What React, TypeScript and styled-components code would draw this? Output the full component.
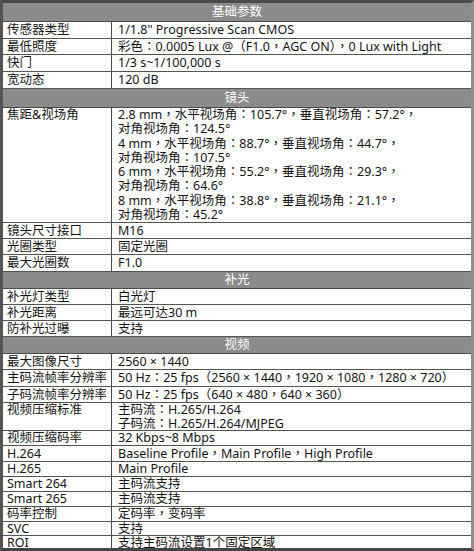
import React from "react";
import styled, { createGlobalStyle } from "styled-components";

const GlobalStyle = createGlobalStyle`
  html, body {
    margin: 0;
    padding: 0;
    background: #ffffff;
  }
  body {
    font-family: "Noto Sans", "Noto Sans CJK SC", sans-serif;
    color: #141414;
  }
`;

type Spec = {
  label: string;
  lines: string[];
  h: number;
};

type Section = {
  title: string;
  h: number;
  rows: Spec[];
};

const sections: Section[] = [
  {
    title: "基础参数",
    h: 19,
    rows: [
      { label: "传感器类型", lines: ["1/1.8\" Progressive Scan CMOS"], h: 17 },
      {
        label: "最低照度",
        lines: ["彩色：0.0005 Lux @（F1.0，AGC ON），0 Lux with Light"],
        h: 16,
      },
      { label: "快门", lines: ["1/3 s~1/100,000 s"], h: 17 },
      { label: "宽动态", lines: ["120 dB"], h: 17 },
    ],
  },
  {
    title: "镜头",
    h: 19,
    rows: [
      {
        label: "焦距&视场角",
        lines: [
          "2.8 mm，水平视场角：105.7°，垂直视场角：57.2°，",
          "对角视场角：124.5°",
          "4 mm，水平视场角：88.7°，垂直视场角：44.7°，",
          "对角视场角：107.5°",
          "6 mm，水平视场角：55.2°，垂直视场角：29.3°，",
          "对角视场角：64.6°",
          "8 mm，水平视场角：38.8°，垂直视场角：21.1°，",
          "对角视场角：45.2°",
        ],
        h: 115,
      },
      { label: "镜头尺寸接口", lines: ["M16"], h: 16 },
      { label: "光圈类型", lines: ["固定光圈"], h: 16 },
      { label: "最大光圈数", lines: ["F1.0"], h: 17 },
    ],
  },
  {
    title: "补光",
    h: 17,
    rows: [
      { label: "补光灯类型", lines: ["白光灯"], h: 16 },
      { label: "补光距离", lines: ["最远可达30 m"], h: 16 },
      { label: "防补光过曝", lines: ["支持"], h: 16 },
    ],
  },
  {
    title: "视频",
    h: 17,
    rows: [
      { label: "最大图像尺寸", lines: ["2560 × 1440"], h: 16 },
      {
        label: "主码流帧率分辨率",
        lines: ["50 Hz：25 fps（2560 × 1440，1920 × 1080，1280 × 720）"],
        h: 17,
      },
      {
        label: "子码流帧率分辨率",
        lines: ["50 Hz：25 fps（640 × 480，640 × 360）"],
        h: 16,
      },
      {
        label: "视频压缩标准",
        lines: ["主码流：H.265/H.264", "子码流：H.265/H.264/MJPEG"],
        h: 28,
      },
      { label: "视频压缩码率", lines: ["32 Kbps~8 Mbps"], h: 15 },
      {
        label: "H.264",
        lines: ["Baseline Profile，Main Profile，High Profile"],
        h: 16,
      },
      { label: "H.265", lines: ["Main Profile"], h: 15 },
      { label: "Smart 264", lines: ["主码流支持"], h: 15 },
      { label: "Smart 265", lines: ["主码流支持"], h: 15 },
      { label: "码率控制", lines: ["定码率，变码率"], h: 15 },
      { label: "SVC", lines: ["支持"], h: 14 },
      { label: "ROI", lines: ["支持主码流设置1个固定区域"], h: 12 },
    ],
  },
];

// full-width punctuation is drawn centred, as in the source sheet
function Text({ children }: { children: string }) {
  const parts = children.split(/([：，（）])/);
  return (
    <>
      {parts.map((part, i) =>
        /^[：，（）]$/.test(part) ? (
          <Punct key={i}>{part}</Punct>
        ) : (
          <React.Fragment key={i}>{part}</React.Fragment>
        )
      )}
    </>
  );
}

function App() {
  return (
    <>
      <GlobalStyle />
      <Sheet>
        {sections.map((section) => (
          <React.Fragment key={section.title}>
            <SectionHead $h={section.h}>{section.title}</SectionHead>
            {section.rows.map((row) => (
              <Row key={row.label} $h={row.h}>
                <Label $multi={row.lines.length > 1}>{row.label}</Label>
                <Value $multi={row.lines.length > 1}>
                  {row.lines.map((line, i) => (
                    <Line key={i}>
                      <Text>{line}</Text>
                    </Line>
                  ))}
                </Value>
              </Row>
            ))}
          </React.Fragment>
        ))}
      </Sheet>
    </>
  );
}

const Sheet = styled.div`
  width: 474px;
  box-sizing: border-box;
  border-top: 3px solid #4a4a4a;
  border-left: 3px solid #555555;
  border-right: 3px solid #8e8e8e;
  border-bottom: 3px solid #454545;
  font-size: 12.5px;
`;

const SectionHead = styled.div<{ $h: number }>`
  height: ${(p) => p.$h}px;
  line-height: ${(p) => p.$h - 1}px;
  box-sizing: border-box;
  background-color: #8b8b8b;
  color: #ffffff;
  text-align: center;
  border-bottom: 1px solid #4a4a4a;
`;

const Row = styled.div<{ $h: number }>`
  display: grid;
  grid-template-columns: 109px 1fr;
  height: ${(p) => p.$h}px;
  box-sizing: border-box;
  border-bottom: 1px solid #555555;

  &:last-child {
    border-bottom: none;
  }
`;

const Label = styled.div<{ $multi: boolean }>`
  display: flex;
  align-items: ${(p) => (p.$multi ? "flex-start" : "center")};
  padding-left: 4px;
  line-height: 14px;
  border-right: 1px solid #4a4a4a;
  white-space: nowrap;
`;

const Value = styled.div<{ $multi: boolean }>`
  display: flex;
  flex-direction: column;
  justify-content: ${(p) => (p.$multi ? "space-between" : "center")};
  padding-left: 6px;
  line-height: 14px;
  white-space: nowrap;
  min-height: 0;
`;

const Line = styled.div`
  height: 14px;
`;

const Punct = styled.span`
  font-family: "Noto Sans CJK TC", "Noto Sans CJK SC", sans-serif;
  line-height: 0;
`;

export default App;
